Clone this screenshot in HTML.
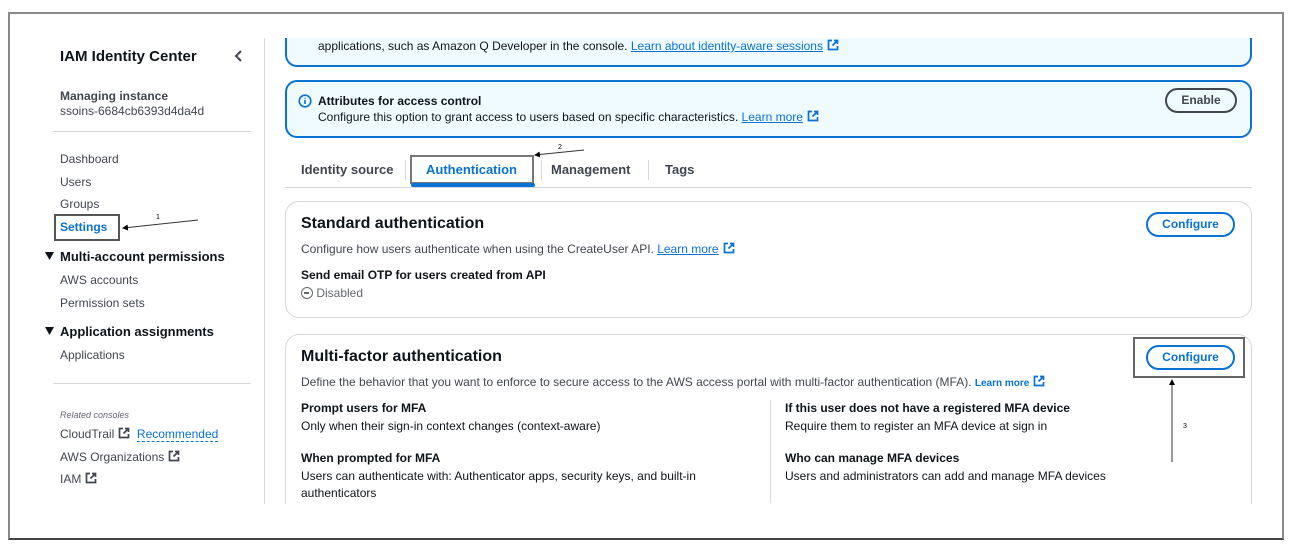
<!DOCTYPE html>
<html><head><meta charset="utf-8"><style>
*{box-sizing:border-box;margin:0;padding:0}
body{width:1292px;height:551px;background:#fff;font-family:"Liberation Sans",sans-serif;color:#0f141a;position:relative;overflow:hidden;font-size:12px}
.a{position:absolute;white-space:nowrap}
.frame{position:absolute;left:8px;top:12px;width:1276px;height:528px;border:2px solid #8a8a8a;border-bottom-color:#444;z-index:5;pointer-events:none}
.nav{font-size:12px;color:#424650}
.b{font-weight:bold}
.lnk{color:#0972d3;text-decoration:underline}
.ext{display:inline-block;width:12px;height:12px;vertical-align:-1px;margin-left:4px}
.box{position:absolute;border:2px solid #0972d3;background:#f0fbff;border-radius:12px}
.card{position:absolute;border:1px solid #d5d8dd;border-radius:14px;background:#fff}
.btn{position:absolute;border:2px solid #0972d3;border-radius:14px;color:#0972d3;font-weight:bold;text-align:center;font-size:12px;line-height:20px}
.ann{position:absolute;border:2px solid #555}
</style></head><body>
<svg width="0" height="0" style="position:absolute"><defs><symbol id="x" viewBox="0 0 12 12"><path d="M5 1.5H1.5V10.5H10.5V7" stroke="currentColor" stroke-width="1.7" fill="none"/><path d="M7 1.5H10.5V5M10.5 1.5L5.5 6.5" stroke="currentColor" stroke-width="1.7" fill="none"/></symbol></defs></svg>
<div class="frame"></div>
<div class="a b" style="left:60px;top:48px;font-size:15px">IAM Identity Center</div>
<svg class="a" style="left:234px;top:50px" width="10" height="12"><path d="M7 1 L2 6 L7 11" stroke="#424650" stroke-width="2" fill="none"/></svg>
<div class="a b" style="left:60px;top:89px;color:#424650">Managing instance</div>
<div class="a" style="left:60px;top:104px;color:#424650">ssoins-6684cb6393d4da4d</div>
<div class="a" style="left:53px;top:131px;width:198px;height:1px;background:#d5d8dd"></div>
<div class="a nav" style="left:60px;top:152px">Dashboard</div>
<div class="a nav" style="left:60px;top:175px">Users</div>
<div class="a nav" style="left:60px;top:197px">Groups</div>
<div class="a b" style="left:60px;top:220px;color:#0972d3">Settings</div>
<div class="ann" style="left:54px;top:214px;width:66px;height:27px"></div>
<svg class="a" style="left:45px;top:252px" width="10" height="8"><path d="M0 0H9L4.5 8z" fill="#0f141a"/></svg>
<div class="a b" style="left:60px;top:249px;font-size:13px">Multi-account permissions</div>
<div class="a nav" style="left:60px;top:273px">AWS accounts</div>
<div class="a nav" style="left:60px;top:296px">Permission sets</div>
<svg class="a" style="left:45px;top:327px" width="10" height="8"><path d="M0 0H9L4.5 8z" fill="#0f141a"/></svg>
<div class="a b" style="left:60px;top:324px;font-size:13px">Application assignments</div>
<div class="a nav" style="left:60px;top:348px">Applications</div>
<div class="a" style="left:53px;top:383px;width:198px;height:1px;background:#d5d8dd"></div>
<div class="a" style="left:60px;top:410px;font-size:9px;font-style:italic;color:#656871">Related consoles</div>
<div class="a nav" style="left:60px;top:427px">CloudTrail<svg class="ext"><use href="#x"/></svg> &nbsp;<span style="color:#0972d3;border-bottom:1px dashed #0972d3">Recommended</span></div>
<div class="a nav" style="left:60px;top:450px">AWS Organizations<svg class="ext"><use href="#x"/></svg></div>
<div class="a nav" style="left:60px;top:472px">IAM<svg class="ext"><use href="#x"/></svg></div>
<div class="a" style="left:264px;top:38px;width:1px;height:466px;background:#d5d8dd"></div>

<div class="box" style="left:285px;top:20px;width:967px;height:47px;border-top:none;border-radius:0 0 12px 12px"></div>
<div class="a" style="top:14px;height:24px;background:#fff;left:280px;width:980px"></div>
<div class="a" style="left:318px;top:39px;color:#0f141a">applications, such as Amazon Q Developer in the console. <span class="lnk">Learn about identity-aware sessions</span><svg class="ext" style="color:#0972d3"><use href="#x"/></svg></div>

<div class="box" style="left:285px;top:80px;width:967px;height:58px"></div>
<svg class="a" style="left:298px;top:94px" width="14" height="14"><circle cx="7" cy="7" r="5.8" stroke="#0972d3" stroke-width="1.6" fill="none"/><path d="M7 6v4M7 3.8v1" stroke="#0972d3" stroke-width="1.6"/></svg>
<div class="a b" style="left:318px;top:94px">Attributes for access control</div>
<div class="a" style="left:318px;top:110px">Configure this option to grant access to users based on specific characteristics. <span class="lnk">Learn more</span><svg class="ext" style="color:#0972d3"><use href="#x"/></svg></div>
<div class="btn" style="left:1165px;top:88px;width:72px;height:25px;border-color:#424650;color:#424650">Enable</div>

<div class="a b" style="left:301px;top:162px;font-size:13px;color:#424650">Identity source</div>
<div class="a" style="left:405px;top:160px;width:1px;height:20px;background:#d5d8dd"></div>
<div class="a b" style="left:426px;top:162px;font-size:13px;color:#0972d3">Authentication</div>
<div class="ann" style="left:410px;top:155px;width:124px;height:29px;border-color:#777"></div>
<div class="a" style="left:411px;top:183px;width:124px;height:4px;background:#0972d3;border-radius:2px"></div>
<div class="a" style="left:541px;top:160px;width:1px;height:20px;background:#d5d8dd"></div>
<div class="a b" style="left:551px;top:162px;font-size:13px;color:#424650">Management</div>
<div class="a" style="left:648px;top:160px;width:1px;height:20px;background:#d5d8dd"></div>
<div class="a b" style="left:665px;top:162px;font-size:13px;color:#424650">Tags</div>
<div class="a" style="left:285px;top:187px;width:967px;height:1px;background:#d5d8dd"></div>

<div class="card" style="left:285px;top:201px;width:967px;height:117px"></div>
<div class="a b" style="left:301px;top:215px;font-size:16px">Standard authentication</div>
<div class="a" style="left:301px;top:242px;color:#424650">Configure how users authenticate when using the CreateUser API. <span class="lnk">Learn more</span><svg class="ext" style="color:#0972d3"><use href="#x"/></svg></div>
<div class="a b" style="left:301px;top:268px">Send email OTP for users created from API</div>
<div class="a" style="left:301px;top:286px;color:#656871"><span style="display:inline-block;width:12px;height:12px;border:1.5px solid #656871;border-radius:50%;vertical-align:-2px;position:relative"><span style="position:absolute;left:2px;top:4px;width:5px;height:1.5px;background:#656871"></span></span> Disabled</div>
<div class="btn" style="left:1146px;top:212px;width:89px;height:25px">Configure</div>

<div class="card" style="left:285px;top:334px;width:967px;height:200px;border-bottom:none"></div>
<div class="a" style="left:270px;top:504px;width:1000px;height:34px;background:#fff"></div>
<div class="a b" style="left:301px;top:348px;font-size:16px">Multi-factor authentication</div>
<div class="a" style="left:301px;top:375px;color:#424650">Define the behavior that you want to enforce to secure access to the AWS access portal with multi-factor authentication (MFA). <span class="lnk b" style="font-size:10px;text-decoration:none">Learn more</span><svg class="ext" style="color:#0972d3"><use href="#x"/></svg></div>
<div class="btn" style="left:1146px;top:345px;width:89px;height:25px">Configure</div>
<div class="ann" style="left:1133px;top:337px;width:112px;height:41px;border-color:#666"></div>
<div class="a b" style="left:301px;top:401px">Prompt users for MFA</div>
<div class="a" style="left:301px;top:419px">Only when their sign-in context changes (context-aware)</div>
<div class="a b" style="left:301px;top:451px">When prompted for MFA</div>
<div class="a" style="left:301px;top:469px">Users can authenticate with: Authenticator apps, security keys, and built-in</div>
<div class="a" style="left:301px;top:486px">authenticators</div>
<div class="a" style="left:770px;top:400px;width:1px;height:103px;background:#d5d8dd"></div>
<div class="a b" style="left:785px;top:401px">If this user does not have a registered MFA device</div>
<div class="a" style="left:785px;top:419px">Require them to register an MFA device at sign in</div>
<div class="a b" style="left:785px;top:451px">Who can manage MFA devices</div>
<div class="a" style="left:785px;top:469px">Users and administrators can add and manage MFA devices</div>

<svg class="a" style="left:0;top:0" width="1292" height="551">
<defs><marker id="m" markerWidth="6" markerHeight="6" refX="5" refY="3" orient="auto"><path d="M0 0L6 3L0 6z" fill="#000"/></marker></defs>
<line x1="198" y1="220" x2="123" y2="228" stroke="#333" stroke-width="1" marker-end="url(#m)"/>
<text x="156" y="219" font-size="7" font-family="Liberation Sans">1</text>
<line x1="584" y1="150" x2="535" y2="155" stroke="#333" stroke-width="1" marker-end="url(#m)"/>
<text x="558" y="149" font-size="7" font-family="Liberation Sans">2</text>
<line x1="1172" y1="462" x2="1172" y2="380" stroke="#333" stroke-width="1" marker-end="url(#m)"/>
<text x="1183" y="428" font-size="7" font-family="Liberation Sans">3</text>
</svg>
</body></html>
